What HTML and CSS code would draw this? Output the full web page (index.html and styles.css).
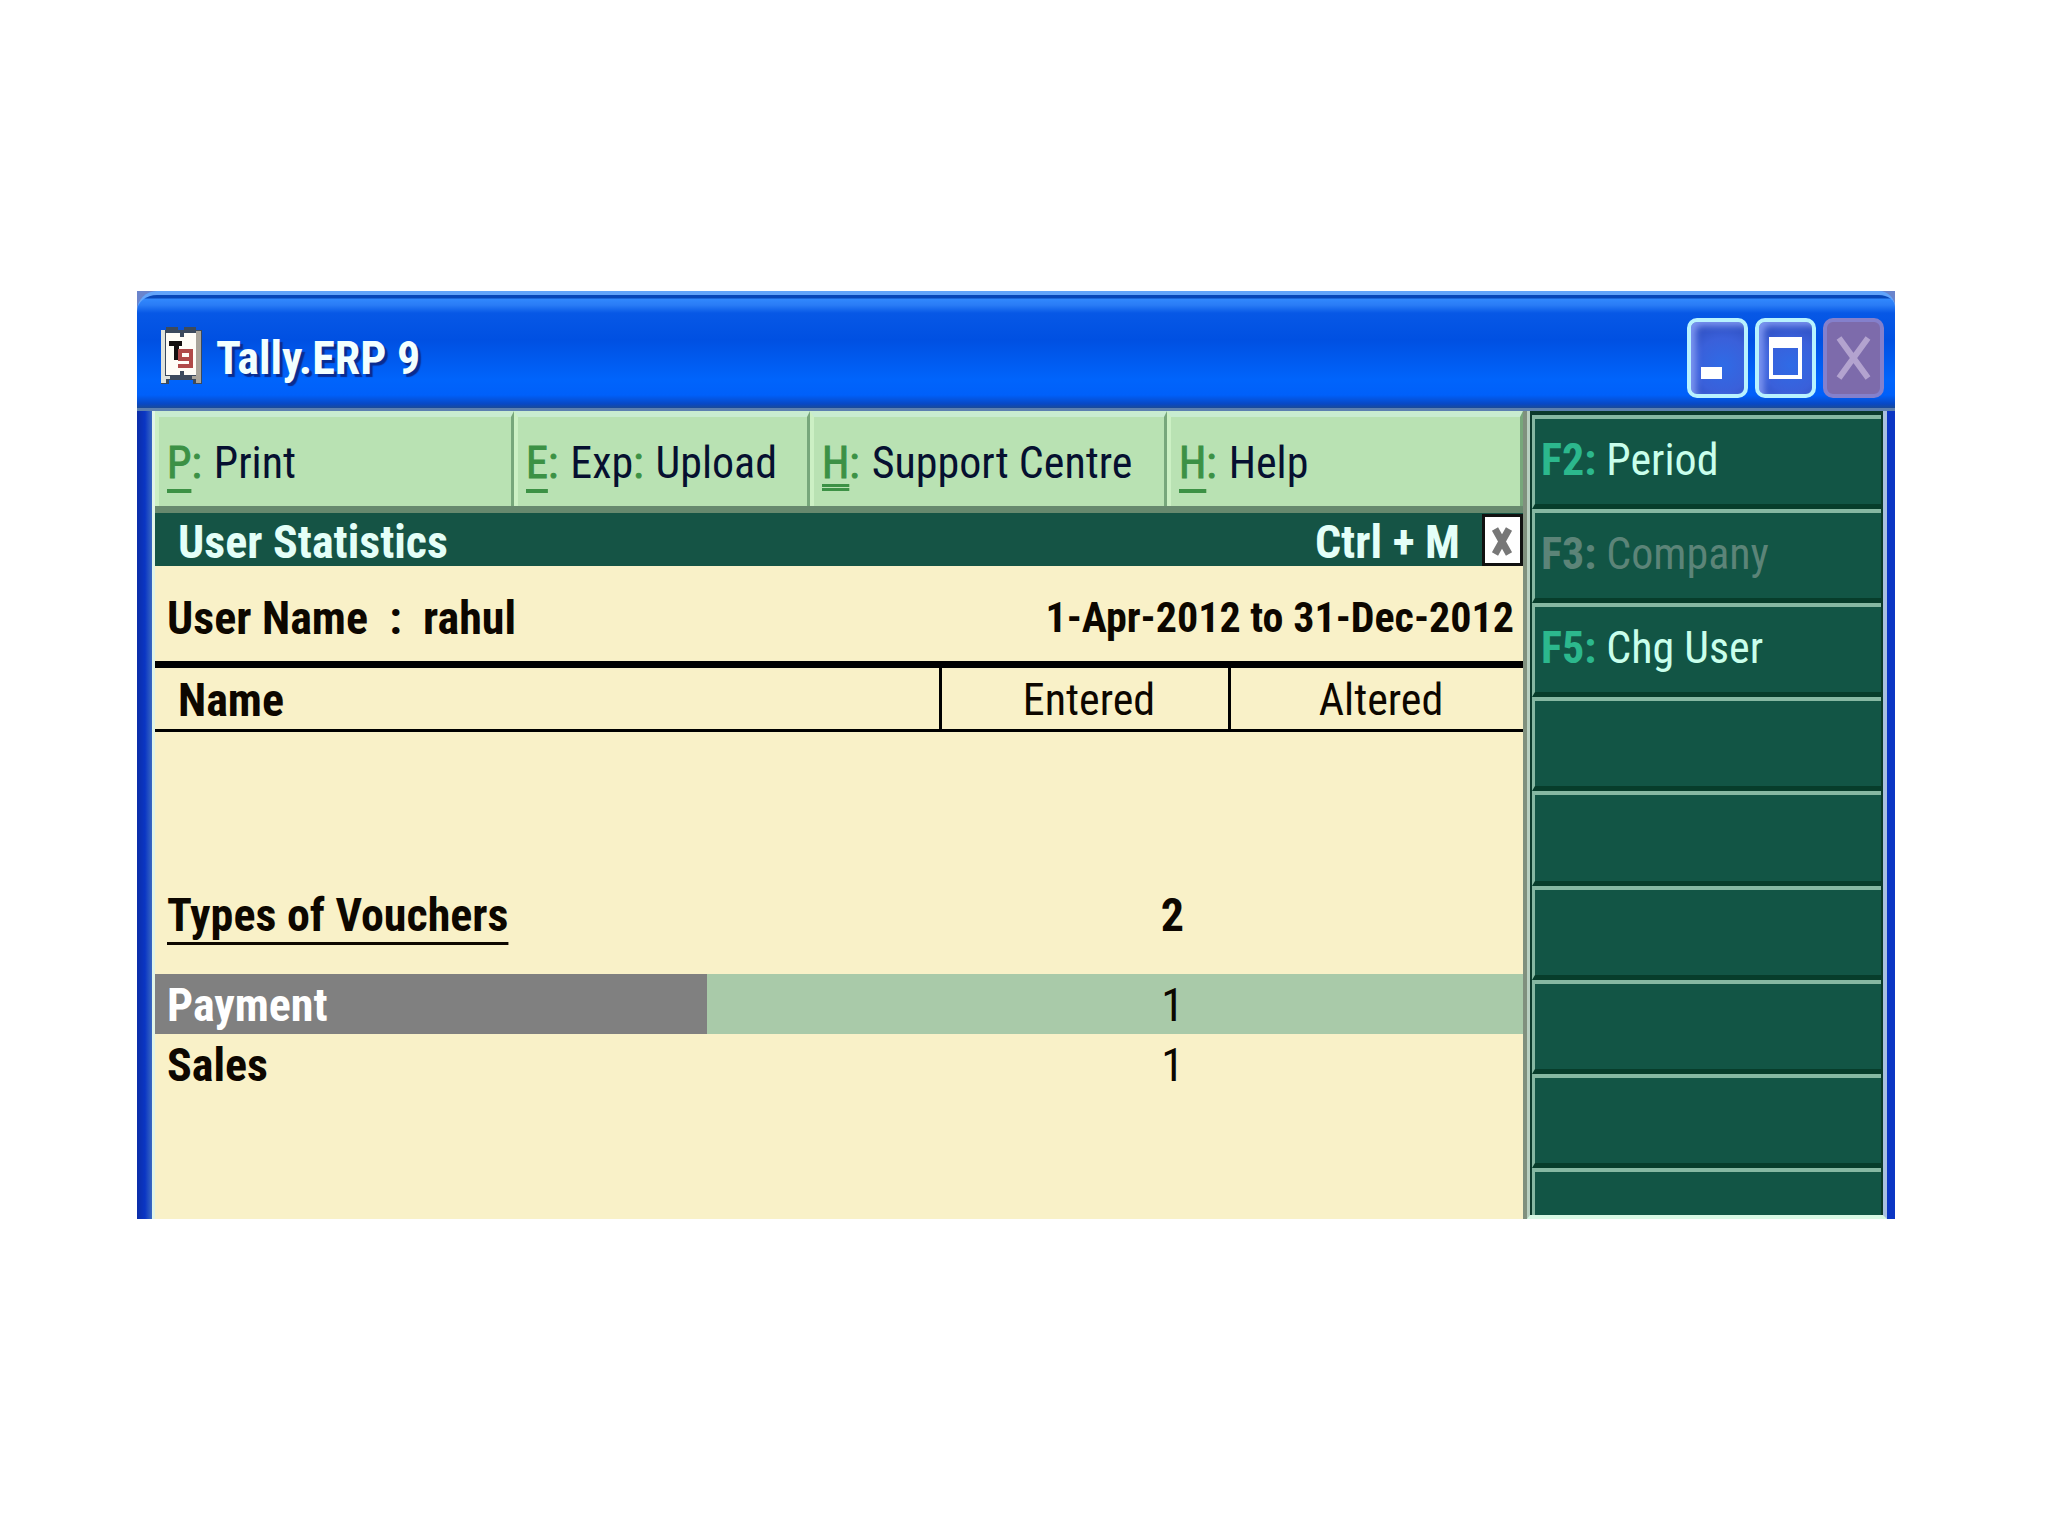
FILE: index.html
```html
<!DOCTYPE html>
<html lang="en">

<head>
    <meta charset="UTF-8">
    <meta name="viewport" content="width=device-width, initial-scale=1.0">
    <title>Tally.ERP 9</title>
    <link rel="stylesheet" href="styles.css">
</head>

<body>

    <div class="window">
        <!-- Title bar -->
        <header class="titlebar">
            <svg class="logo" viewBox="0 0 42 60" aria-hidden="true">
                <path d="M1 6h5V3h12v3h6V3h12v3h6v54h-9v-4H9v4H1z" fill="#3c4a5c" />
                <path d="M1 6h4v46h5v3H6v4H1z" fill="#dfe3dc" />
                <path d="M36 7h5v52h-5v-4h-4v-3h4z" fill="#aaa59a" />
                <path d="M6 9h14v4h4V9h12v42H24v-4h-4v4H6z" fill="#fffdf6" />
                <path d="M9 17h13v5h-3v10h3v4h-8V22H9z" fill="#15100f" />
                <path d="M18 25h15v19H18v-4h11v-3H18zM22 29v4h7v-4z" fill="#b04a48" fill-rule="evenodd" />
            </svg>
            <h1>Tally.ERP 9</h1>
            <div class="controls">
                <button type="button" class="control" aria-label="Minimize">
                    <svg viewBox="0 0 60 80"><path d="M14 49h21v12H14z" fill="#fff" /></svg>
                </button>
                <button type="button" class="control" aria-label="Maximize">
                    <svg viewBox="0 0 60 80"><path d="M14 19h33v42H14zM18 30v27h25V30z" fill="#fff" fill-rule="evenodd" /></svg>
                </button>
                <button type="button" class="control off" aria-label="Close" disabled>
                    <svg viewBox="0 0 60 80"><path d="M16 20l29 40M45 20L16 60" stroke="#b3a3cf" stroke-width="6" /></svg>
                </button>
            </div>
        </header>

        <div class="client">
            <main class="main">
                <nav class="toolbar">
                    <button type="button"><span class="key"><u>P</u>:</span> Print</button>
                    <button type="button"><span class="key"><u>E</u>:</span> Exp<span class="key">:</span> Upload</button>
                    <button type="button"><span class="key"><u class="double">H</u>:</span> Support Centre</button>
                    <button type="button"><span class="key"><u>H</u>:</span> Help</button>
                </nav>

                <div class="caption">
                    <h2>User Statistics</h2>
                    <span>Ctrl + M</span>
                    <button type="button" class="close" aria-label="Close report">
                        <svg viewBox="0 0 40 50"><path d="M13 14l14 25M27 14L13 39" stroke="#777" stroke-width="7" /></svg>
                    </button>
                </div>

                <div class="info">
                    <span>User Name &nbsp;: &nbsp;rahul</span>
                    <span class="period">1-Apr-2012 to 31-Dec-2012</span>
                </div>

                <!-- Voucher counts -->
                <table>
                    <thead>
                        <tr>
                            <th class="name">Name</th>
                            <th class="entered">Entered</th>
                            <th class="altered">Altered</th>
                        </tr>
                    </thead>
                    <tbody>
                        <tr class="group">
                            <td><span>Types of Vouchers</span></td>
                            <td>2</td>
                            <td></td>
                        </tr>
                        <tr class="selected">
                            <td>Payment</td>
                            <td>1</td>
                            <td></td>
                        </tr>
                        <tr>
                            <td>Sales</td>
                            <td>1</td>
                            <td></td>
                        </tr>
                    </tbody>
                </table>
            </main>

            <!-- Function key buttons -->
            <aside class="sidebar">
                <button type="button"><b>F2:</b> Period</button>
                <button type="button" disabled><b>F3:</b> Company</button>
                <button type="button"><b>F5:</b> Chg User</button>
                <div class="slot"></div>
                <div class="slot"></div>
                <div class="slot"></div>
                <div class="slot"></div>
                <div class="slot"></div>
                <div class="slot"></div>
            </aside>
        </div>
    </div>

</body>

</html>
```

FILE: styles.css
```css
* {
    box-sizing: border-box;
}

body {
    margin: 0;
    padding: 291px 153px 0 137px;
    background-color: #fff;
    font-family: "Roboto Condensed", "Arial Narrow", "Liberation Sans Narrow", "Liberation Sans", sans-serif;
    font-size: 46px;
    line-height: 60px;
    color: #0d0700;
}

button {
    margin: 0;
    padding: 0;
    border: none;
    background: none;
    font: inherit;
    color: inherit;
    text-align: left;
    white-space: nowrap;
    cursor: pointer;
}

h1,
h2 {
    margin: 0;
    font-size: inherit;
}

.window {
    background: #6a84cc;
}

/* Title bar */
.titlebar {
    display: flex;
    align-items: center;
    height: 120px;
    padding: 12px 11px 0 23px;
    border-top: 4px solid #62a4fa;
    border-bottom: 3px solid #5c80b0;
    border-radius: 20px 16px 0 0;
    background: linear-gradient(#0847b8 0, #0847b8 3px, #3188fd 4px, #2a7cf6 10px, #0758e6 18px, #0050e2 45px, #0064fc 85px, #0060fa 100px, #0848c4 109px, #1a4a98 113px);
}

.logo {
    width: 42px;
    height: 60px;
    margin: 0 14px 8px 0;
}

.titlebar h1 {
    color: #f2ffff;
    text-shadow: 3px 3px 1px #0a2c90;
}

.controls {
    display: flex;
    gap: 7px;
    margin-left: auto;
}

.control {
    width: 61px;
    height: 80px;
    border: 4px solid #b8f2ff;
    border-radius: 10px;
    background: radial-gradient(circle at 60% 60%, #2f6be6 0, #3a60da 50%, #2a48b4 100%);
    box-shadow: inset 5px 4px 6px #7b94f0;
}

.control svg {
    display: block;
    width: 60px;
    height: 80px;
    margin: -4px;
}

.control.off {
    border-color: #8480cc;
    background: #7d6bab;
    box-shadow: none;
}

/* Client area */
.client {
    display: flex;
    height: 808px;
    padding: 0 8px 0 15px;
    background: linear-gradient(90deg, #0b2da8 0, #0b36c4 8px, #3a69c0 15px, #0b36c4 16px);
}

.main {
    flex: 1;
    min-width: 0;
    border-left: 3px solid #e0f4e8;
    border-right: 4px solid #80907e;
    background-color: #f9f1c8;
}

.toolbar {
    display: grid;
    grid-template-columns: 359fr 296fr 357fr 356fr;
    height: 102px;
    border-bottom: 7px solid #67896e;
    font-size: 44px;
}

.toolbar button {
    padding: 2px 0 0 8px;
    border-top: 6px solid #c8ecd0;
    border-left: 4px solid #ccf0c4;
    border-right: 3px solid #77a77b;
    background-color: #b9e2b3;
    color: #061030;
}

.key {
    margin-right: 2px;
    color: #3c9145;
    -webkit-text-stroke: 1px #3c9145;
}

.key u {
    text-decoration-thickness: 4px;
    text-underline-offset: 11px;
}

.key .double {
    text-decoration-style: double;
    text-decoration-thickness: 3px;
    text-underline-offset: 6px;
}

.caption {
    display: flex;
    align-items: center;
    height: 53px;
    padding-left: 23px;
    background-color: #155445;
    color: #e4fff8;
    font-weight: bold;
}

.caption h2,
.caption span {
    padding-top: 4px;
}

.caption span {
    margin-left: auto;
}

.close {
    width: 41px;
    height: 52px;
    margin-left: 22px;
    border: 3px solid #111;
    background-color: #fff;
}

.close svg {
    display: block;
    width: 40px;
    height: 50px;
    margin: -3px;
}

.info {
    display: flex;
    justify-content: space-between;
    height: 102px;
    padding: 22px 9px 0 12px;
    border-bottom: 7px solid #000;
    font-weight: bold;
    white-space: pre;
}

.period {
    font-size: 42px;
}

/* Table */
table {
    width: 100%;
    table-layout: fixed;
    border-collapse: separate;
    border-spacing: 0;
}

th,
td {
    padding: 2px 0 0;
    height: 60px;
    line-height: 58px;
}

th {
    height: 64px;
    padding-left: 8px;
    border-bottom: 3px solid #000;
    border-left: 3px solid #000;
    font-size: 44px;
    font-weight: normal;
}

th.name {
    padding-left: 23px;
    border-left: none;
    font-size: 46px;
    font-weight: bold;
    text-align: left;
}

.entered {
    width: 289px;
}

.altered {
    width: 295px;
}

td:first-child {
    padding-left: 12px;
    font-weight: bold;
}

td:nth-child(2) {
    padding-right: 44px;
    text-align: right;
}

.group td {
    height: 242px;
    padding-top: 124px;
    font-weight: bold;
    line-height: 118px;
}

.group span {
    text-decoration: underline 3px;
    text-underline-offset: 11px;
}

.selected td {
    background-color: #a9caa9;
}

.selected td:first-child {
    background: linear-gradient(90deg, #808080 552px, #a9caa9 552px);
    color: #fff;
}

/* Sidebar */
.sidebar {
    display: grid;
    grid-template-rows: repeat(8, 2fr) 1fr;
    width: 360px;
    padding: 4px 2px 0 2px;
    border-left: 3px solid #b8cfc0;
    border-right: 4px solid #a8c0e0;
    border-bottom: 4px solid #d8f8e4;
    background-color: #0b3a2c;
    font-size: 44px;
}

.sidebar button,
.slot {
    padding: 0 0 4px 6px;
    border-top: 4px solid #86b8a2;
    border-left: 3px solid #86b8a2;
    border-bottom: 5px solid #073d2b;
    background-color: #125545;
    color: #c9ffec;
}

.slot:last-child {
    border-bottom: none;
}

.sidebar b {
    color: #2cb88d;
}

.sidebar button:disabled,
.sidebar button:disabled b {
    color: #5c8478;
}
```
